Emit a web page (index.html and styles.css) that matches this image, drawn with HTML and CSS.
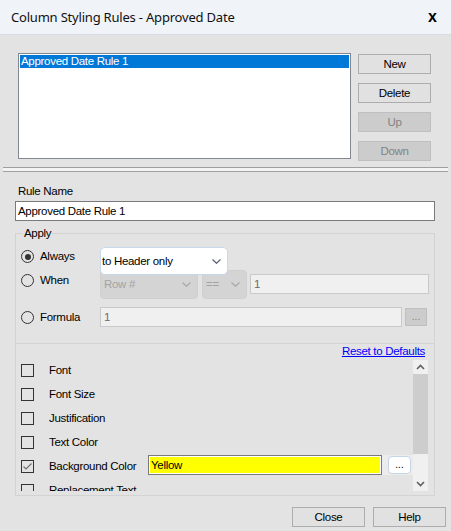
FILE: index.html
```html
<!DOCTYPE html>
<html>
<head>
<meta charset="utf-8">
<link rel="stylesheet" href="styles.css">
</head>
<body>
<div class="titlebar">
  <span class="title">Column Styling Rules - Approved Date</span>
  <span class="close">x</span>
</div>
<div class="top">
  <div class="rulelist">
    <div class="rule sel">Approved Date Rule 1</div>
  </div>
  <div class="sidebtns">
    <div class="btn">New</div>
    <div class="btn">Delete</div>
    <div class="btn disabled">Up</div>
    <div class="btn disabled">Down</div>
  </div>
</div>
<div class="sep"></div>
<div class="lbl rn-lbl">Rule Name</div>
<div class="textbox">Approved Date Rule 1</div>
<div class="group">
  <span class="legend">Apply</span>
  <div class="arow r1">
    <div class="opt"><span class="radio on"></span><span class="optlbl">Always</span></div>
  </div>
  <div class="arow r2">
    <div class="opt"><span class="radio"></span><span class="optlbl">When</span></div>
    <div class="combo c-row"><span>Row #</span><svg class="chev" width="9" height="5" viewBox="0 0 9 5"><polyline points="0.5,0.5 4.5,4.3 8.5,0.5" fill="none" stroke="#a9a9a9" stroke-width="1.2"/></svg></div>
    <div class="combo c-op"><span>==</span><svg class="chev" width="9" height="5" viewBox="0 0 9 5"><polyline points="0.5,0.5 4.5,4.3 8.5,0.5" fill="none" stroke="#a9a9a9" stroke-width="1.2"/></svg></div>
    <div class="field f-val">1</div>
  </div>
  <div class="arow r3">
    <div class="opt"><span class="radio"></span><span class="optlbl">Formula</span></div>
    <div class="field f-formula">1</div>
    <div class="ell disabled">...</div>
  </div>
  <div class="dropdown"><span>to Header only</span><svg class="chev" width="9" height="5" viewBox="0 0 9 5"><polyline points="0.5,0.5 4.5,4.3 8.5,0.5" fill="none" stroke="#5a6270" stroke-width="1.2"/></svg></div>
</div>
<div class="panel">
  <div class="reset"><a class="link">Reset to Defaults</a></div>
  <div class="listwrap">
    <div class="props">
      <div class="prow"><span class="cb"></span><span class="plbl">Font</span></div>
      <div class="prow"><span class="cb"></span><span class="plbl">Font Size</span></div>
      <div class="prow"><span class="cb"></span><span class="plbl">Justification</span></div>
      <div class="prow"><span class="cb"></span><span class="plbl">Text Color</span></div>
      <div class="prow"><span class="cb"><svg width="11" height="11" viewBox="0 0 11 11"><polyline points="1.5,5.5 4,8 9.5,2.5" fill="none" stroke="#6f6f6f" stroke-width="1.1"/></svg></span><span class="plbl">Background Color</span>
        <div class="colorval">Yellow</div>
        <div class="strip"><div class="ell2">...</div></div>
      </div>
      <div class="prow"><span class="cb"></span><span class="plbl">Replacement Text</span></div>
    </div>
    <div class="scrollbar">
      <div class="sarrow"><svg width="9" height="6" viewBox="0 0 9 6"><polyline points="1,5 4.5,1.5 8,5" fill="none" stroke="#606060" stroke-width="1.6"/></svg></div>
      <div class="thumb"></div>
      <div class="track"></div>
      <div class="sarrow"><svg width="9" height="6" viewBox="0 0 9 6"><polyline points="1,1 4.5,4.5 8,1" fill="none" stroke="#606060" stroke-width="1.6"/></svg></div>
    </div>
  </div>
</div>
<div class="bottom">
  <div class="btn">Close</div>
  <div class="btn">Help</div>
</div>
</body>
</html>
```
FILE: styles.css
```css
* { box-sizing: border-box; }
html, body { margin: 0; padding: 0; }
body {
  width: 451px;
  height: 531px;
  overflow: hidden;
  background: #e3e3e3;
  font-family: "Liberation Sans", Arial, sans-serif;
  font-size: 11.5px;
  letter-spacing: -0.3px;
  color: #000;
  line-height: 13px;
}
.titlebar {
  height: 35px;
  background: #f0f4f9;
  border-bottom: 1px solid #d9dde3;
  display: flex;
  align-items: center;
  justify-content: space-between;
  padding: 0 14px 0 11px;
}
.title {
  font-family: "Noto Sans", "Open Sans", sans-serif;
  font-size: 13px;
  letter-spacing: -0.2px;
  color: #111;
}
.close {
  font-family: "Liberation Sans", Arial, sans-serif;
  font-weight: bold;
  font-size: 16px;
  letter-spacing: 0;
  margin-top: -2px;
}
.top {
  display: flex;
  padding: 18px 0 0 18px;
}
.rulelist {
  width: 333px;
  height: 106px;
  background: #fff;
  border: 1px solid #828790;
  padding: 1px;
}
.rule {
  height: 13px;
  line-height: 13px;
  padding-left: 1px;
}
.rule.sel { background: #0078d7; color: #fff; }
.sidebtns {
  margin-left: 7px;
  margin-top: 1px;
  display: flex;
  flex-direction: column;
  gap: 9px;
}
.btn {
  width: 73px;
  height: 20px;
  border: 1px solid #adadad;
  background: #e1e1e1;
  display: flex;
  align-items: center;
  justify-content: center;
}
.btn.disabled {
  background: #cccccc;
  border-color: #bfbfbf;
  color: #838383;
}
.sep {
  margin: 6px 3px 0;
  height: 5px;
  border-top: 1px solid #a0a0a0;
  border-bottom: 1px solid #a0a0a0;
  background: #f3f3f3;
}
.rn-lbl {
  margin-top: 13px;
  padding-left: 18px;
  height: 13px;
}
.textbox {
  margin: 3px 0 0 15px;
  width: 420px;
  height: 20px;
  border: 1px solid #7a7a7a;
  background: #fff;
  padding-left: 2px;
  display: flex;
  align-items: center;
}
.group {
  position: relative;
  margin: 12px 0 0 15px;
  width: 420px;
  height: 111px;
  border: 1px solid #d3d3d3;
}
.legend {
  position: absolute;
  left: 7px;
  top: -7px;
  padding: 0 1px;
  background: #e3e3e3;
}
.arow { display: flex; align-items: flex-start; }
.r1 { margin-top: 16px; height: 13px; }
.r2 { margin-top: 7px; height: 29px; }
.r3 { margin-top: 8px; height: 20px; }
.opt {
  width: 84px;
  padding-left: 5px;
  display: flex;
  align-items: center;
  height: 13px;
}
.r2 .opt, .r3 .opt { margin-top: 4px; }
.radio {
  width: 13px;
  height: 13px;
  border: 1px solid #333;
  border-radius: 50%;
  display: flex;
  align-items: center;
  justify-content: center;
  flex: none;
}
.radio.on::after {
  content: "";
  width: 6px;
  height: 6px;
  border-radius: 50%;
  background: #333;
}
.optlbl { margin-left: 6px; }
.combo {
  height: 29px;
  background: #d4d4d4;
  border: 1px solid #d0d0d0;
  border-radius: 4px;
  display: flex;
  align-items: center;
  justify-content: space-between;
  padding: 0 6px 0 3px;
  color: #a3a3a3;
}
.c-row { width: 98px; }
.c-op { width: 45px; margin-left: 4px; }
.chev { display: block; }
.field {
  height: 20px;
  background: #f0f0f0;
  border: 1px solid #c9c9c9;
  padding-left: 3px;
  display: flex;
  align-items: center;
  color: #6d6d6d;
}
.f-val { width: 179px; margin-left: 3px; margin-top: 4px; }
.f-formula { width: 302px; }
.ell {
  width: 22px;
  height: 18px;
  margin: 1px 0 0 3px;
  border: 1px solid #bfbfbf;
  background: #cccccc;
  color: #838383;
  display: flex;
  align-items: flex-end;
  justify-content: center;
  padding-bottom: 2px;
  letter-spacing: 0;
  font-size: 10px;
}
.dropdown {
  position: absolute;
  left: 84px;
  top: 13px;
  width: 128px;
  height: 28px;
  background: #fff;
  border: 1px solid #c9d9ec;
  border-radius: 5px;
  display: flex;
  align-items: center;
  justify-content: space-between;
  padding: 1px 6px 0 1px;
}
.panel {
  margin-left: 15px;
  width: 420px;
  height: 152px;
  border: 1px solid #d3d3d3;
  border-top: none;
  padding-bottom: 4px;
}
.reset {
  padding: 1px 9px 0 0;
  height: 14px;
  text-align: right;
}
.link { color: #0000ff; text-decoration: underline; }
.listwrap {
  display: flex;
  height: 133px;
  overflow: hidden;
}
.props {
  width: 397px;
  height: 133px;
  overflow: hidden;
}
.prow {
  height: 24px;
  display: flex;
  align-items: center;
}
.cb {
  width: 13px;
  height: 13px;
  margin-left: 5px;
  border: 1px solid #333;
  flex: none;
  display: flex;
  align-items: center;
  justify-content: center;
}
.cb svg { display: block; }
.plbl { margin-left: 15px; width: 99px; flex: none; }
.colorval {
  width: 234px;
  height: 20px;
  margin-bottom: 2px;
  border: 1px solid #7a7a7a;
  box-shadow: inset 0 0 0 1px #fff;
  background: #ffff00;
  padding-left: 2px;
  display: flex;
  align-items: center;
  flex: none;
}
.strip {
  flex: 1;
  height: 20px;
  margin-bottom: 2px;
  background: #ececec;
  padding: 1px 0 0 6px;
}
.ell2 {
  width: 23px;
  height: 18px;
  background: #fff;
  border: 1px solid #c6d4e7;
  border-radius: 4px;
  display: flex;
  align-items: flex-end;
  justify-content: center;
  padding-bottom: 2px;
  font-size: 10px;
  letter-spacing: 0;
}
.scrollbar {
  width: 15px;
  margin-top: 2px;
  height: 131px;
  background: #f0f0f0;
  display: flex;
  flex-direction: column;
}
.sarrow {
  height: 14px;
  display: flex;
  align-items: center;
  justify-content: center;
}
.thumb { height: 80px; background: #cdcdcd; margin-top: 0; }
.track { flex: 1; }
.bottom {
  display: flex;
  justify-content: flex-end;
  gap: 8px;
  padding-right: 5px;
  margin-top: 11px;
}
```
